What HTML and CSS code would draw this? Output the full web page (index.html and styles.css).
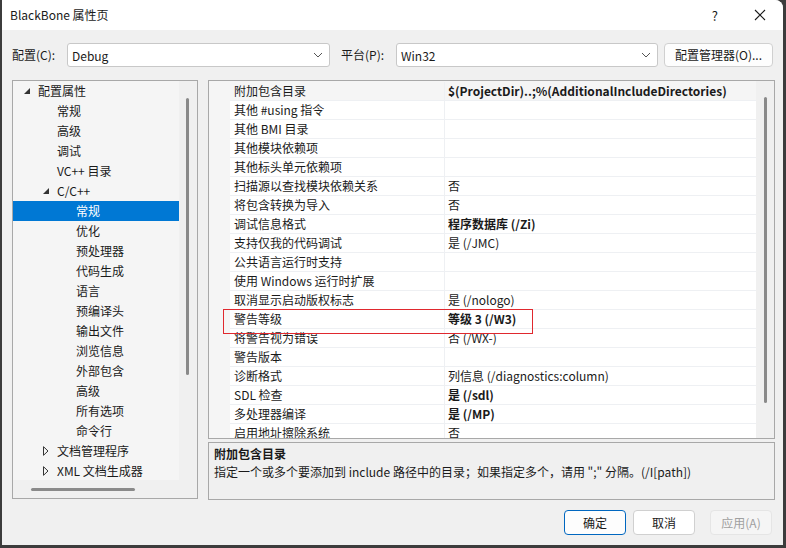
FILE: index.html
```html
<!DOCTYPE html>
<html lang="zh-CN">
<head>
    <meta charset="UTF-8">
    <title>BlackBone 属性页</title>
    <link rel="stylesheet" href="styles.css">
</head>
<body>

<div class="window">
    <div class="titlebar">
        <span class="title">BlackBone 属性页</span>
        <div class="caption">
            <span class="help">?</span>
            <svg class="close" width="12" height="12" viewBox="0 0 12 12"><path d="M1 1 L11 11 M11 1 L1 11" stroke="#1a1a1a" stroke-width="1.1" fill="none"/></svg>
        </div>
    </div>

    <div class="config-row">
        <label class="cfg-label">配置(C):</label>
        <div class="combo combo-config">
            <span>Debug</span>
            <svg width="10" height="6" viewBox="0 0 10 6"><path d="M1 1 L5 5 L9 1" stroke="#555" stroke-width="1" fill="none"/></svg>
        </div>
        <label class="cfg-label">平台(P):</label>
        <div class="combo combo-platform">
            <span>Win32</span>
            <svg width="10" height="6" viewBox="0 0 10 6"><path d="M1 1 L5 5 L9 1" stroke="#555" stroke-width="1" fill="none"/></svg>
        </div>
        <button class="btn btn-manager">配置管理器(O)...</button>
    </div>

    <div class="main">
        <!-- albero delle pagine -->
        <div class="tree">
            <div class="tree-content">
                <div class="node lvl1"><span class="tog"><svg width="6" height="6" viewBox="0 0 6 6"><path d="M6 0 L6 6 L0 6 Z" fill="#333"/></svg></span>配置属性</div>
                <div class="node lvl2"><span class="tog"></span>常规</div>
                <div class="node lvl2"><span class="tog"></span>高级</div>
                <div class="node lvl2"><span class="tog"></span>调试</div>
                <div class="node lvl2"><span class="tog"></span>VC++ 目录</div>
                <div class="node lvl2"><span class="tog"><svg width="6" height="6" viewBox="0 0 6 6"><path d="M6 0 L6 6 L0 6 Z" fill="#333"/></svg></span>C/C++</div>
                <div class="node lvl3 selected"><span class="tog"></span>常规</div>
                <div class="node lvl3"><span class="tog"></span>优化</div>
                <div class="node lvl3"><span class="tog"></span>预处理器</div>
                <div class="node lvl3"><span class="tog"></span>代码生成</div>
                <div class="node lvl3"><span class="tog"></span>语言</div>
                <div class="node lvl3"><span class="tog"></span>预编译头</div>
                <div class="node lvl3"><span class="tog"></span>输出文件</div>
                <div class="node lvl3"><span class="tog"></span>浏览信息</div>
                <div class="node lvl3"><span class="tog"></span>外部包含</div>
                <div class="node lvl3"><span class="tog"></span>高级</div>
                <div class="node lvl3"><span class="tog"></span>所有选项</div>
                <div class="node lvl3"><span class="tog"></span>命令行</div>
                <div class="node lvl2"><span class="tog"><svg width="6" height="10" viewBox="0 0 6 10"><path d="M0.5 0.7 L5 5 L0.5 9.3 Z" stroke="#333" stroke-width="1" fill="none"/></svg></span>文档管理程序</div>
                <div class="node lvl2"><span class="tog"><svg width="6" height="10" viewBox="0 0 6 10"><path d="M0.5 0.7 L5 5 L0.5 9.3 Z" stroke="#333" stroke-width="1" fill="none"/></svg></span>XML 文档生成器</div>
            </div>
            <div class="vscroll"><span class="thumb-v tree-thumb-v"></span></div>
            <div class="hscroll"><span class="thumb-h"></span></div>
            <div class="corner"></div>
        </div>

        <div class="right">
            <div class="grid">
                <div class="grid-body">
                    <div class="rows">
                        <div class="row first"><span class="name">附加包含目录</span><span class="value bold">$(ProjectDir)..;%(AdditionalIncludeDirectories)</span></div>
                        <div class="row"><span class="name">其他 #using 指令</span><span class="value"></span></div>
                        <div class="row"><span class="name">其他 BMI 目录</span><span class="value"></span></div>
                        <div class="row"><span class="name">其他模块依赖项</span><span class="value"></span></div>
                        <div class="row"><span class="name">其他标头单元依赖项</span><span class="value"></span></div>
                        <div class="row"><span class="name">扫描源以查找模块依赖关系</span><span class="value">否</span></div>
                        <div class="row"><span class="name">将包含转换为导入</span><span class="value">否</span></div>
                        <div class="row"><span class="name">调试信息格式</span><span class="value bold">程序数据库 (/Zi)</span></div>
                        <div class="row"><span class="name">支持仅我的代码调试</span><span class="value">是 (/JMC)</span></div>
                        <div class="row"><span class="name">公共语言运行时支持</span><span class="value"></span></div>
                        <div class="row"><span class="name">使用 Windows 运行时扩展</span><span class="value"></span></div>
                        <div class="row"><span class="name">取消显示启动版权标志</span><span class="value">是 (/nologo)</span></div>
                        <div class="row"><span class="name">警告等级</span><span class="value bold">等级 3 (/W3)</span></div>
                        <div class="row"><span class="name">将警告视为错误</span><span class="value">否 (/WX-)</span></div>
                        <div class="row"><span class="name">警告版本</span><span class="value"></span></div>
                        <div class="row"><span class="name">诊断格式</span><span class="value">列信息 (/diagnostics:column)</span></div>
                        <div class="row"><span class="name">SDL 检查</span><span class="value bold">是 (/sdl)</span></div>
                        <div class="row"><span class="name">多处理器编译</span><span class="value bold">是 (/MP)</span></div>
                        <div class="row"><span class="name">启用地址擦除系统</span><span class="value">否</span></div>
                    </div>
                    <div class="vscroll grid-scroll"><span class="thumb-v grid-thumb-v"></span></div>
                </div>
                <div class="highlight"></div>
            </div>

            <div class="desc">
                <div class="desc-title">附加包含目录</div>
                <div class="desc-text">指定一个或多个要添加到 include 路径中的目录；如果指定多个，请用 ";" 分隔。(/I[path])</div>
            </div>
        </div>
    </div>

    <div class="footer">
        <button class="btn btn-ok">确定</button>
        <button class="btn btn-cancel">取消</button>
        <button class="btn btn-apply" disabled>应用(A)</button>
    </div>
</div>

</body>
</html>
```

FILE: styles.css
```css
body {
    margin: 0;
    background-color: #3c3c3c;
    font-family: "Noto Sans CJK SC", sans-serif;
    font-size: 12px;
    color: #1a1a1a;
    overflow: hidden;
}

.window {
    margin-left: 2px;
    width: 781px;
    height: 545px;
    background-color: #f0f0f0;
    border-top-right-radius: 8px;
    overflow: hidden;
}

.titlebar {
    height: 30px;
    background-color: #ffffff;
    display: flex;
    align-items: center;
    justify-content: space-between;
    padding-left: 8px;
}

.title {
    font-size: 12px;
    line-height: 16px;
}

.caption {
    display: flex;
    align-items: center;
}

.help {
    font-size: 13px;
    margin-right: 36px;
}

.close {
    margin-right: 17px;
}

.config-row {
    display: flex;
    align-items: center;
    padding: 13px 0 0 10px;
    height: 24px;
}

.cfg-label {
    width: 55px;
    line-height: 16px;
}

.combo {
    height: 22px;
    border: 1px solid #c8c8c8;
    border-radius: 3px;
    background-color: #ffffff;
    display: flex;
    align-items: center;
    justify-content: space-between;
    padding: 0 6px 0 4px;
    box-sizing: content-box;
}

.combo-config {
    width: 251px;
    margin-right: 11px;
}

.combo-platform {
    width: 250px;
    margin-right: 6px;
}

.btn {
    font-family: "Noto Sans CJK SC", sans-serif;
    font-size: 12px;
    color: #1a1a1a;
    background-color: #fdfdfd;
    border: 1px solid #d0d0d0;
    border-radius: 4px;
    padding: 0;
    line-height: 16px;
}

.btn-manager {
    width: 109px;
    height: 24px;
}

.main {
    display: flex;
    margin-top: 13px;
    padding-left: 10px;
    height: 430px;
}

/* albero */
.tree {
    width: 186px;
    height: 419px;
    box-sizing: border-box;
    border: 1px solid #a8a8a8;
    display: grid;
    grid-template-columns: 1fr 18px;
    grid-template-rows: 1fr 18px;
    margin-right: 10px;
}

.tree-content {
    background-color: #f5f5f5;
    overflow: hidden;
}

.node {
    height: 20px;
    display: flex;
    align-items: center;
    white-space: nowrap;
    line-height: 16px;
}

.node .tog {
    width: 14px;
    display: flex;
    align-items: center;
}

.lvl1 { padding-left: 11px; }
.lvl2 { padding-left: 30px; }
.lvl3 { padding-left: 49px; }

.node.selected {
    background-color: #0078d4;
    color: #ffffff;
}

.vscroll {
    background-color: #f0f0f0;
    position: relative;
}

.hscroll {
    background-color: #f0f0f0;
    position: relative;
}

.corner {
    background-color: #f0f0f0;
}

.thumb-v {
    position: absolute;
    left: 7px;
    width: 3px;
    border-radius: 2px;
    background-color: #8a8a8a;
}

.tree-thumb-v {
    top: 17px;
    height: 277px;
}

.thumb-h {
    position: absolute;
    top: 8px;
    left: 18px;
    width: 104px;
    height: 3px;
    border-radius: 2px;
    background-color: #8a8a8a;
}

/* griglia proprieta */
.right {
    width: 567px;
    display: flex;
    flex-direction: column;
}

.grid {
    position: relative;
    height: 359px;
    box-sizing: border-box;
    border: 1px solid #a8a8a8;
    background-color: #f5f5f5;
}

.grid-body {
    display: flex;
    height: 100%;
}

.rows {
    flex: 1;
    padding-top: 1px;
    padding-left: 21px;
    overflow: hidden;
}

.row {
    display: grid;
    grid-template-columns: 215px 1fr;
    height: 19px;
    background-color: #ffffff;
    box-sizing: border-box;
    border-bottom: 1px solid #eef0f3;
}

.row.first {
    background-color: #f5f5f5;
}

.row span {
    display: flex;
    align-items: center;
    white-space: nowrap;
    line-height: 16px;
    overflow: hidden;
}

.name {
    padding-left: 4px;
    border-right: 1px solid #eef0f3;
}

.value {
    padding-left: 3px;
}

.bold {
    font-weight: bold;
}

.grid-scroll {
    width: 18px;
}

.grid-thumb-v {
    left: 8px;
    top: 16px;
    height: 306px;
}

.highlight {
    position: absolute;
    left: 14px;
    top: 228px;
    width: 310px;
    height: 25px;
    border: 1px solid #e0282e;
    box-sizing: border-box;
}

.desc {
    margin-top: 3px;
    height: 58px;
    box-sizing: border-box;
    border: 1px solid #a8a8a8;
    padding: 2px 5px;
}

.desc-title {
    font-weight: bold;
    line-height: 18px;
}

.desc-text {
    line-height: 18px;
}

.footer {
    display: flex;
    padding-left: 562px;
}

.btn-ok,
.btn-cancel,
.btn-apply {
    width: 62px;
    height: 25px;
}

.btn-ok {
    border-color: #0067c0;
    margin-right: 7px;
}

.btn-cancel {
    background-color: #ffffff;
    margin-right: 15px;
}

.btn-apply {
    background-color: #f5f5f5;
    border-color: #e5e5e5;
    color: #a0a0a0;
}
```
